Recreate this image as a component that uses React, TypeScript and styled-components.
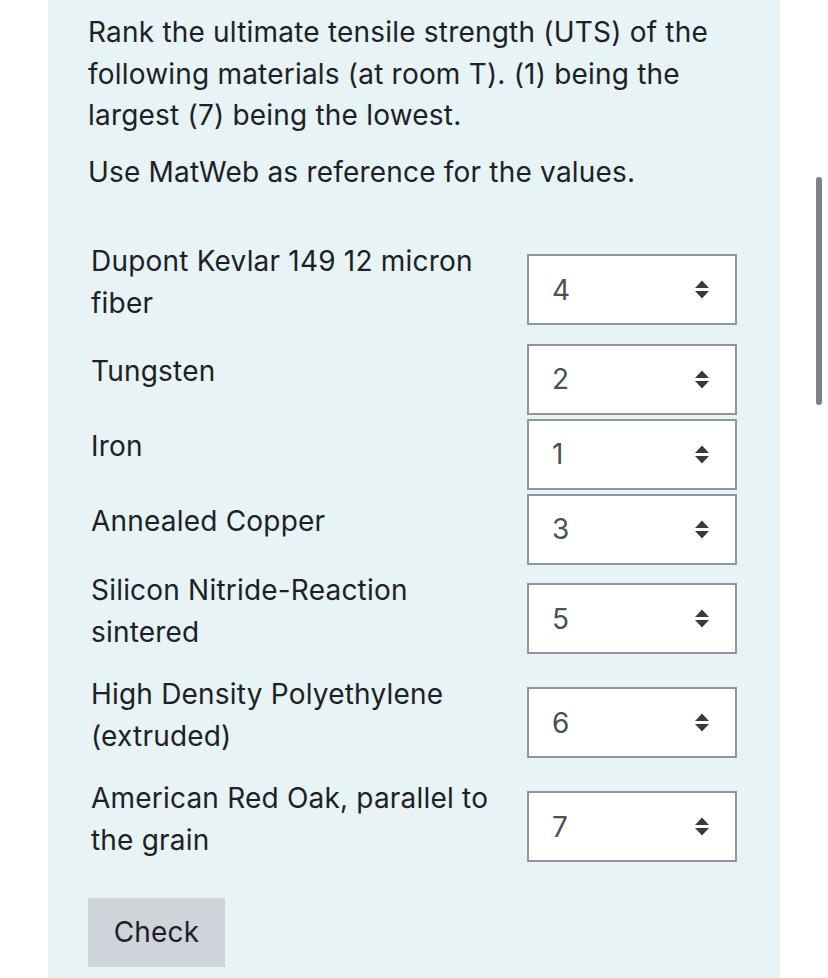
import React from "react";
import styled, { createGlobalStyle } from "styled-components";

const GlobalStyle = createGlobalStyle`
  html, body {
    margin: 0;
    padding: 0;
    background: #ffffff;
  }
  body {
    font-family: Inter, "Liberation Sans", Arial, sans-serif;
    color: #1d2125;
  }
`;

const Page = styled.div`
  position: relative;
  width: 828px;
  height: 978px;
  overflow: hidden;
  display: flex;
  padding-left: 48px;
  box-sizing: border-box;
`;

const Panel = styled.div`
  width: 732px;
  min-height: 978px;
  box-sizing: border-box;
  background: #e7f3f5;
  padding: 12px 40px 0 40px;
`;

const Para = styled.p`
  margin: 0 0 15.5px 0;
  font-size: 28px;
  line-height: 41.5px;
  letter-spacing: 0.2px;
  color: #1d2125;
`;

const Answers = styled.div`
  margin-top: 46px;
  display: flex;
  flex-direction: column;
  gap: 4px;
`;

const Row = styled.div`
  display: flex;
  align-items: center;
`;

const Label = styled.div`
  width: 439px;
  box-sizing: border-box;
  padding: 0 20px 16px 3px;
  font-size: 28px;
  line-height: 42px;
  letter-spacing: 0.2px;
  color: #1d2125;
`;

const SelectBox = styled.div`
  width: 210px;
  height: 71px;
  box-sizing: border-box;
  border: 2px solid #8f959e;
  background: #ffffff;
  display: flex;
  align-items: center;
  justify-content: space-between;
  padding: 0 26px 0 23px;
  font-size: 28px;
  color: #495057;
`;

const Button = styled.button`
  margin-top: 21px;
  width: 137px;
  height: 69px;
  border: none;
  border-radius: 0;
  background: #ced4da;
  font-family: Inter, "Liberation Sans", Arial, sans-serif;
  font-size: 28px;
  letter-spacing: 0.2px;
  color: #1d2125;
  padding: 0;
`;

const Scrollbar = styled.div`
  position: absolute;
  left: 816px;
  top: 177px;
  width: 6px;
  height: 228px;
  border-radius: 3px;
  background: #808080;
`;

const Arrows = () => (
  <svg width="14" height="19" viewBox="0 0 14 19" aria-hidden="true">
    <polygon points="0,8 7,0.5 14,8" fill="#343a40" />
    <polygon points="0,11 14,11 7,18.5" fill="#343a40" />
  </svg>
);

const items: { label: string; value: string }[] = [
  { label: "Dupont Kevlar 149 12 micron fiber", value: "4" },
  { label: "Tungsten", value: "2" },
  { label: "Iron", value: "1" },
  { label: "Annealed Copper", value: "3" },
  { label: "Silicon Nitride-Reaction sintered", value: "5" },
  { label: "High Density Polyethylene (extruded)", value: "6" },
  { label: "American Red Oak, parallel to the grain", value: "7" },
];

export default function App() {
  return (
    <>
      <GlobalStyle />
      <Page>
        <Panel>
          <Para>
            Rank the ultimate tensile strength (UTS) of the following materials
            (at room T). (1) being the largest (7) being the lowest.
          </Para>
          <Para>Use MatWeb as reference for the values.</Para>
          <Answers>
            {items.map((it) => (
              <Row key={it.label}>
                <Label>{it.label}</Label>
                <SelectBox>
                  <span>{it.value}</span>
                  <Arrows />
                </SelectBox>
              </Row>
            ))}
          </Answers>
          <Button>Check</Button>
        </Panel>
        <Scrollbar />
      </Page>
    </>
  );
}
